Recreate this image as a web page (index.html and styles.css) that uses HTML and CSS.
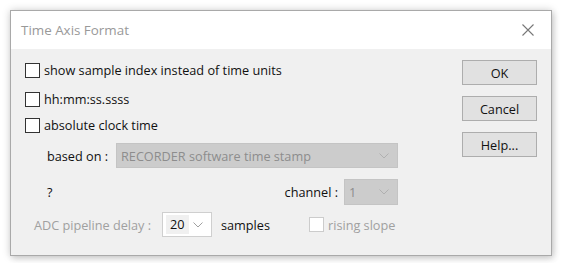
FILE: index.html
```html
<!DOCTYPE html>
<html>
<head>
<meta charset="utf-8">
<link rel="stylesheet" href="styles.css">
</head>
<body>
<div class="dialog">
  <div class="titlebar">
    <span class="title">Time Axis Format</span>
    <svg class="close" width="12" height="12" viewBox="0 0 12 12"><path d="M0.5 0.5 L11.5 11.5 M11.5 0.5 L0.5 11.5" stroke="#777" stroke-width="1.1" fill="none"/></svg>
  </div>
  <div class="body">
    <div class="left">
      <div class="row r1"><span class="cb"></span><span class="lbl">show sample index instead of time units</span></div>
      <div class="row r2"><span class="cb"></span><span class="lbl">hh:mm:ss.ssss</span></div>
      <div class="row r3"><span class="cb"></span><span class="lbl">absolute clock time</span></div>
      <div class="row r4">
        <span class="lbl based">based on :</span>
        <div class="combo dis wide"><span class="ctext">RECORDER software time stamp</span><svg class="chev" width="10" height="6" viewBox="0 0 10 6"><path d="M0.5 0.5 L5 5 L9.5 0.5" stroke="#b0b0b0" fill="none"/></svg></div>
      </div>
      <div class="row r5">
        <span class="lbl q">?</span>
        <div class="chan">
          <span class="lbl">channel :</span>
          <div class="combo dis small"><span class="ctext">1</span><svg class="chev" width="10" height="6" viewBox="0 0 10 6"><path d="M0.5 0.5 L5 5 L9.5 0.5" stroke="#b0b0b0" fill="none"/></svg></div>
        </div>
      </div>
      <div class="row r6">
        <span class="lbl gray adc">ADC pipeline delay :</span>
        <div class="combo en num"><span class="sel">20</span><svg class="chev" width="10" height="6" viewBox="0 0 10 6"><path d="M0.5 0.5 L5 5 L9.5 0.5" stroke="#a0a0a0" fill="none"/></svg></div>
        <span class="lbl samples">samples</span>
        <span class="cb dcb"></span><span class="lbl gray">rising slope</span>
      </div>
    </div>
    <div class="right">
      <button class="btn">OK</button>
      <button class="btn">Cancel</button>
      <button class="btn">Help...</button>
    </div>
  </div>
</div>
</body>
</html>
```
FILE: styles.css
```css
html, body {
  margin: 0;
  padding: 0;
  background: #ffffff;
}
body {
  width: 561px;
  height: 263px;
  overflow: hidden;
  font-family: "Open Sans", "Noto Sans", sans-serif;
  font-size: 12.7px;
  color: #111111;
}
.dialog {
  margin: 10px 0 0 10px;
  width: 540px;
  height: 244px;
  border: 1px solid #a9a9a9;
  background: #f0f0f0;
  box-shadow: 0 0 8px rgba(0,0,0,0.18), 2px 3px 6px rgba(0,0,0,0.12);
  display: flex;
  flex-direction: column;
}
.titlebar {
  height: 38px;
  background: #ffffff;
  display: flex;
  align-items: center;
  justify-content: space-between;
  padding: 0 17px 0 10px;
  flex: none;
}
.title {
  font-size: 13.4px;
  color: #999999;
}
.close {
  display: block;
}
.body {
  flex: 1;
  display: flex;
  padding: 0 14px 0 14px;
}
.left {
  width: 373px;
  display: flex;
  flex-direction: column;
}
.right {
  margin-left: auto;
  padding-top: 11px;
  display: flex;
  flex-direction: column;
  gap: 11px;
}
.btn {
  width: 75px;
  height: 25px;
  margin: 0;
  padding: 0;
  background: #e1e1e1;
  border: 1px solid #adadad;
  font-family: inherit;
  font-size: 12.7px;
  color: #111111;
}
.row {
  display: flex;
  align-items: center;
  flex: none;
}
.r1 { margin-top: 13px; height: 16px; }
.r2 { margin-top: 13px; height: 16px; }
.r3 { margin-top: 10px; height: 16px; }
.r4 { margin-top: 10px; height: 25px; padding-left: 22px; }
.r5 { margin-top: 11px; height: 26px; padding-left: 22px; justify-content: space-between; }
.r6 { margin-top: 7px; height: 25px; padding-left: 9px; }
.cb {
  width: 15px;
  height: 15px;
  box-sizing: border-box;
  border: 1px solid #333333;
  background: #ffffff;
  flex: none;
  margin-left: 0;
  margin-right: 4px;
}
.lbl { white-space: nowrap; }
.gray { color: #a0a0a0; }
.based { width: 69px; }
.combo {
  box-sizing: border-box;
  height: 25px;
  display: flex;
  align-items: center;
  position: relative;
}
.combo.dis {
  background: #cccccc;
  border: 1px solid #c4c4c4;
  color: #8d8d8d;
}
.combo.wide { width: 282px; }
.combo.small { width: 54px; height: 26px; }
.ctext { padding-left: 4px; }
.chev {
  position: absolute;
  right: 8px;
  top: 9px;
}
.chan {
  display: flex;
  align-items: center;
  gap: 6px;
}
.adc { width: 128px; }
.combo.en {
  width: 50px;
  background: #ffffff;
  border: 1px solid #cfcfcf;
}
.sel {
  margin-left: 3px;
  padding: 0 4px;
  height: 19px;
  line-height: 19px;
  background: #f0f0f0;
}
.samples { margin-left: 9px; width: 88px; }
.dcb {
  border-color: #cccccc;
  margin-left: 0;
}
```
